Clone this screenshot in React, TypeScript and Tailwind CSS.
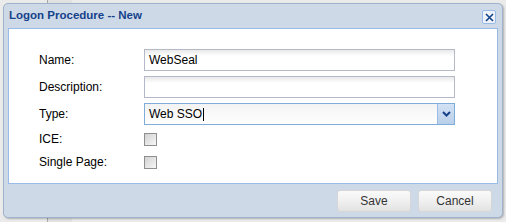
const font = { fontFamily: '"Liberation Sans", Arial, sans-serif' };

function Field({ label, value }: { label: string; value?: string }) {
  return (
    <div className="flex items-center h-[22px]">
      <label className="w-[105px] text-[12px] text-black">{label}</label>
      <div className="w-[311px] h-[22px] border border-[#b5b8c8] bg-gradient-to-b from-[#e9e9e9] via-white via-[30%] to-white px-[4px] flex items-center text-[12px] text-black">
        {value}
      </div>
    </div>
  );
}

function CheckRow({ label }: { label: string }) {
  return (
    <div className="flex items-center h-[18px]">
      <label className="w-[105px] text-[12px] text-black">{label}</label>
      <div className="w-[13px] h-[13px] border border-[#8f8f8f] bg-gradient-to-br from-[#d2d2d2] to-[#f7f7f7]" />
    </div>
  );
}

export default function App() {
  return (
    <div className="relative w-[506px] h-[222px] bg-[#ebebeb] overflow-hidden" style={font}>
      <div className="flex h-full">
        <div className="w-[48px] h-full border-r border-[#a8a8a8]" />
        <div className="w-[24px] h-full bg-[#e2e2e2]" />
      </div>

      {/* dialog */}
      <div className="absolute left-[3px] top-[3px] w-[500px] h-[215px] rounded-[5px] border border-[#9fb3cc] bg-[#cdd9e7] flex flex-col shadow-[1px_1px_2px_rgba(0,0,0,0.25)]">
        <div className="h-[24px] flex items-center justify-between pl-[5px] pr-[6px]">
          <span className="text-[11.5px] font-bold text-[#15428b]">Logon Procedure -- New</span>
          <button className="w-[14px] h-[14px] mt-[2px] rounded-[2px] border border-[#99bbe8] bg-[#eef3fa] flex items-center justify-center">
            <svg width="9" height="9" viewBox="0 0 9 9">
              <path d="M1 1L8 8M8 1L1 8" stroke="#15428b" strokeWidth="1.6" />
            </svg>
          </button>
        </div>

        <div className="mx-[4px] h-[156px] border border-[#99bbe8] bg-white pt-[20px] pl-[30px] flex flex-col gap-[5px]">
          <Field label="Name:" value="WebSeal" />
          <Field label="Description:" />
          <div className="flex items-center h-[22px]">
            <label className="w-[105px] text-[12px] text-black">Type:</label>
            <div className="w-[311px] h-[22px] flex border border-[#7eadd9]">
              <div className="flex-1 bg-gradient-to-b from-[#f3f3f3] to-white px-[4px] flex items-center text-[12px] text-black">
                Web SSO<span className="inline-block w-px h-[13px] bg-black ml-[1px]" />
              </div>
              <div className="w-[17px] border-l border-[#99bbe8] bg-gradient-to-b from-[#d3e2f4] to-[#b9cfea] flex items-center justify-center">
                <svg width="9" height="6" viewBox="0 0 9 6">
                  <path d="M1 1L4.5 4.5L8 1" stroke="#15428b" strokeWidth="2" fill="none" />
                </svg>
              </div>
            </div>
          </div>
          <CheckRow label="ICE:" />
          <CheckRow label="Single Page:" />
        </div>

        <div className="flex justify-end gap-[7px] pt-[6px] pr-[10px]">
          {["Save", "Cancel"].map((t) => (
            <button
              key={t}
              className="w-[74px] h-[22px] rounded-[3px] border border-[#d6d6d6] bg-gradient-to-b from-[#fafafa] via-[#f0f0f0] to-[#e2e2e2] text-[12px] text-[#333]"
            >
              {t}
            </button>
          ))}
        </div>
      </div>
    </div>
  );
}
